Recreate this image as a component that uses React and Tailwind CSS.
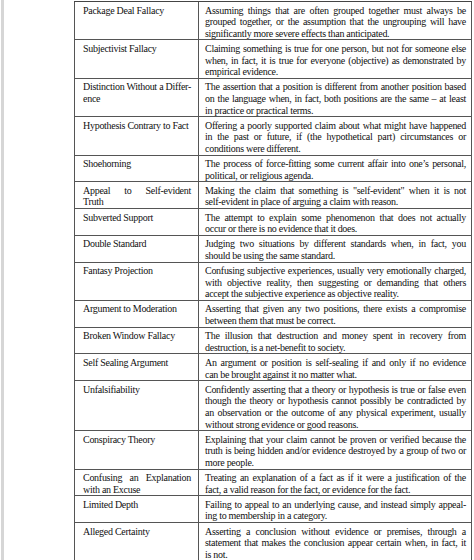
const ROWS = [
  {
    name: ['Package Deal Fallacy'],
    desc: [
      'Assuming things that are often grouped together must always be',
      'grouped together, or the assumption that the ungrouping will have',
      'significantly more severe effects than anticipated.',
    ],
  },
  {
    name: ['Subjectivist Fallacy'],
    desc: [
      'Claiming something is true for one person, but not for someone else',
      'when, in fact, it is true for everyone (objective) as demonstrated by',
      'empirical evidence.',
    ],
  },
  {
    name: ['Distinction Without a Differ-', 'ence'],
    desc: [
      'The assertion that a position is different from another position based',
      'on the language when, in fact, both positions are the same – at least',
      'in practice or practical terms.',
    ],
  },
  {
    name: ['Hypothesis Contrary to Fact'],
    desc: [
      'Offering a poorly supported claim about what might have happened',
      'in the past or future, if (the hypothetical part) circumstances or',
      'conditions were different.',
    ],
  },
  {
    name: ['Shoehorning'],
    desc: [
      'The process of force-fitting some current affair into one’s personal,',
      'political, or religious agenda.',
    ],
  },
  {
    name: ['Appeal to Self-evident', 'Truth'],
    desc: [
      'Making the claim that something is "self-evident" when it is not',
      'self-evident in place of arguing a claim with reason.',
    ],
  },
  {
    name: ['Subverted Support'],
    desc: [
      'The attempt to explain some phenomenon that does not actually',
      'occur or there is no evidence that it does.',
    ],
  },
  {
    name: ['Double Standard'],
    desc: [
      'Judging two situations by different standards when, in fact, you',
      'should be using the same standard.',
    ],
  },
  {
    name: ['Fantasy Projection'],
    desc: [
      'Confusing subjective experiences, usually very emotionally charged,',
      'with objective reality, then suggesting or demanding that others',
      'accept the subjective experience as objective reality.',
    ],
  },
  {
    name: ['Argument to Moderation'],
    desc: [
      'Asserting that given any two positions, there exists a compromise',
      'between them that must be correct.',
    ],
  },
  {
    name: ['Broken Window Fallacy'],
    desc: [
      'The illusion that destruction and money spent in recovery from',
      'destruction, is a net-benefit to society.',
    ],
  },
  {
    name: ['Self Sealing Argument'],
    desc: [
      'An argument or position is self-sealing if and only if no evidence',
      'can be brought against it no matter what.',
    ],
  },
  {
    name: ['Unfalsifiability'],
    desc: [
      'Confidently asserting that a theory or hypothesis is true or false even',
      'though the theory or hypothesis cannot possibly be contradicted by',
      'an observation or the outcome of any physical experiment, usually',
      'without strong evidence or good reasons.',
    ],
  },
  {
    name: ['Conspiracy Theory'],
    desc: [
      'Explaining that your claim cannot be proven or verified because the',
      'truth is being hidden and/or evidence destroyed by a group of two or',
      'more people.',
    ],
  },
  {
    name: ['Confusing an Explanation', 'with an Excuse'],
    desc: [
      'Treating an explanation of a fact as if it were a justification of the',
      'fact, a valid reason for the fact, or evidence for the fact.',
    ],
  },
  {
    name: ['Limited Depth'],
    desc: [
      'Failing to appeal to an underlying cause, and instead simply appeal-',
      'ing to membership in a category.',
    ],
  },
  {
    name: ['Alleged Certainty'],
    desc: [
      'Asserting a conclusion without evidence or premises, through a',
      'statement that makes the conclusion appear certain when, in fact, it',
      'is not.',
    ],
  },
]

// each line its own block so the breaks match the page; all but the last are justified
function Lines({ lines }) {
  return lines.map((l, i) => (
    <div
      key={i}
      className={`whitespace-nowrap ${i < lines.length - 1 ? 'text-justify [text-align-last:justify]' : 'text-left'}`}
    >
      {l}
    </div>
  ))
}

export default function App() {
  return (
    <div
      className="w-[474px] h-[560px] overflow-hidden bg-white flex text-[#111]"
      style={{ fontFamily: '"Liberation Serif", "Times New Roman", serif' }}
    >
      <div className="w-[3px] ml-[1px] bg-[#d6d6d6] shrink-0" />
      <div className="ml-[70px] mt-[1px] w-[398px] border-t border-[#444] text-[10px] tracking-[-0.28px] leading-[11.62px] shrink-0">
        {ROWS.map((r, i) => (
          <div key={i} className="grid grid-cols-[124px_1fr] border-x border-b border-[#555]">
            <div className="border-r border-[#555] pl-[8px] pr-[7px] pt-[2.5px]">
              <Lines lines={r.name} />
            </div>
            <div className="pl-[6px] pr-[5px] pt-[2.5px]">
              <Lines lines={r.desc} />
            </div>
          </div>
        ))}
      </div>
    </div>
  )
}
